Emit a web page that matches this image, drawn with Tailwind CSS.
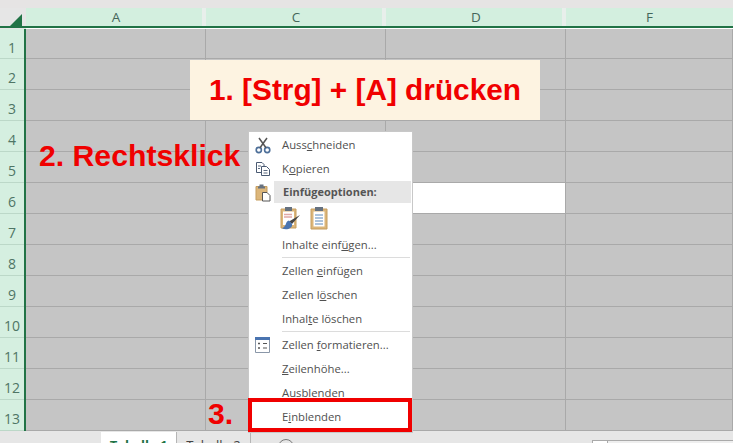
<!DOCTYPE html>
<html lang="de">
<head>
  <meta charset="UTF-8" />
  <title>Excel Einblenden</title>
  <script src="https://cdn.jsdelivr.net/npm/@tailwindcss/browser@4"></script>
</head>
<body class="bg-[#e6e6e6] font-['Open_Sans',sans-serif] overflow-hidden">
  <div class="relative w-[733px] h-[443px] overflow-hidden flex flex-col">
    <div class="h-2 shrink-0 bg-[#e6e4e4]"></div>

    <!-- column headers -->
    <div class="h-[18px] shrink-0 grid grid-cols-[26px_180px_180px_180px_1fr] text-[13.5px] leading-[18px] text-[#44665a] text-center">
      <div class="bg-[#e6e6e6] flex justify-end items-end pr-[3px] pb-0">
        <svg width="13" height="13" viewBox="0 0 13 13"><path d="M0 13L12 1V13Z" fill="#217346"/></svg>
      </div>
      <div class="bg-[#d3efdf] relative">A<div class="absolute right-0 top-0 w-1 h-full bg-[#e8efeb]"></div></div>
      <div class="bg-[#d3efdf] relative">C<div class="absolute right-0 top-0 w-1 h-full bg-[#e8efeb]"></div></div>
      <div class="bg-[#d3efdf] relative">D<div class="absolute right-0 top-0 w-1 h-full bg-[#e8efeb]"></div></div>
      <div class="bg-[#d3efdf]">F</div>
    </div>
    <div class="h-[2px] shrink-0 bg-[#217346]"></div>
    <div class="h-px shrink-0 bg-white ml-[26px]"></div>

    <!-- sheet -->
    <div id="rows" class="shrink-0"></div>

    <!-- tabs -->
    <div class="flex-1 flex items-start pl-[101px] text-[13px] leading-[16px] pt-px">
      <div class="w-[76px] h-[14px] bg-white text-[#217346] font-bold text-center border-r border-[#b5b5b5] pt-[5px]">Tabelle 1</div>
      <div class="w-[74px] h-[14px] text-[#444] text-center border-r border-[#b5b5b5] pt-[5px]">Tabelle 2</div>
      <div class="ml-[27px] mt-[7px] w-4 h-4 rounded-full border border-[#777]"></div>
      <div class="ml-[298px] mt-[8px] w-4 h-4 bg-white border border-[#aaa]"></div>
      <div class="w-[125px] h-4 mt-[8px] border-t border-[#aaa] bg-[#efefef]"></div>
    </div>

    <!-- annotations -->
    <div class="absolute left-[190px] top-[60px] w-[350px] h-[60px] bg-[#fdf3e1] flex items-center justify-center font-['Liberation_Sans',sans-serif] font-bold text-[29.8px] text-[#f00000]">1. [Strg] + [A] drücken</div>
    <div class="absolute left-[39px] top-[138px] font-['Liberation_Sans',sans-serif] font-bold text-[30.2px] leading-9 text-[#f00000]">2. Rechtsklick</div>
    <div class="absolute left-[208px] top-[396px] font-['Liberation_Sans',sans-serif] font-bold text-[30.2px] leading-9 text-[#f00000]">3.</div>

    <!-- context menu -->
    <div class="absolute left-[248px] top-[131px] w-[165px] h-[302px] bg-white border border-[#c8c8c8] pt-[1px] text-[11.3px] text-[#505050]">
      <div class="h-6 flex items-center">
        <svg class="ml-[6px] w-[16px] h-[17px]" viewBox="0 0 16 17" fill="none" stroke="#4d6f99" stroke-width="1.6"><circle cx="3.8" cy="13" r="2.6"/><circle cx="12.2" cy="13" r="2.6"/><path d="M5 10.8 12 1M11 10.8 4 1" stroke="#555" stroke-width="1.500"/></svg>
        <span class="ml-[11px]">Auss<u>c</u>hneiden</span>
      </div>
      <div class="h-6 flex items-center">
        <svg class="ml-[6px] w-[16px] h-[16px]" viewBox="0 0 16 16" fill="#fff" stroke="#4a5a72"><path d="M1.500 1.500H7L9 3.500V11.500H1.500Z"/><path d="M6.500 5.500H11.500L14.500 8.500V14.500H6.500Z"/><path d="M3 5H6M3 7.500H5M8.500 9.500H12.500M8.500 12H12.500" stroke-width=".9"/></svg>
        <span class="ml-[11px]">K<u>o</u>pieren</span>
      </div>
      <div class="h-[22px] flex items-center">
        <svg class="ml-[6px] w-[16px] h-[19px]" viewBox="0 0 16 19"><path d="M1 3.500H12V17H1Z" fill="#dcb67a" stroke="#c59d5f"/><path d="M4.500 3.500V1.500H8.500V3.500H10V5.500H3V3.500Z" fill="#66717f"/><path d="M7.500 9.500H12L15 12.500V18H7.500Z" fill="#fff" stroke="#555"/></svg>
        <div class="ml-[3px] flex-1 mr-px h-[22px] bg-[#e6e6e6] font-bold text-[11px] leading-[22px] pl-[9px] text-[#555]">Einfügeoptionen:</div>
      </div>
      <div class="h-[30px] flex items-center pl-[31px] gap-[10px]">
        <svg class="w-[20px] h-[24px]" viewBox="0 0 20 24"><path d="M1 3H16V22H1Z" fill="#dcb67a" stroke="#c59d5f"/><path d="M3 5.500H14V19H3Z" fill="#fff"/><path d="M4.500 8.500H12.500M4.500 11H12.500" stroke="#c0504d" stroke-dasharray="1 1" stroke-width="1.500"/><path d="M5 1H12V5H5Z" fill="#66717f"/><path d="M20 9 12 18 9 15.500Z" fill="#444"/><path d="M9 14.500C5 15.500 7 20 2 22.500 8 24.500 13 21.500 12 18Z" fill="#4a74b0"/></svg>
        <svg class="w-[18px] h-[24px]" viewBox="0 0 18 24"><path d="M1 3H17V23H1Z" fill="#dcb67a" stroke="#c59d5f"/><path d="M3.500 5.500H14.500V20.500H3.500Z" fill="#fff"/><path d="M5 9H13M5 12H13M5 15H13M5 18H13" stroke="#5a87b8"/><path d="M5 1H13V5H5Z" fill="#66717f"/></svg>
      </div>
      <div class="h-6 flex items-center pl-[33px]"><span>Inhalte einf<u>ü</u>gen...</span></div>
      <div class="h-[2px] ml-[33px] mr-[2px] border-t border-[#dcdcdc]"></div>
      <div class="h-6 flex items-center pl-[33px]"><span>Zellen <u>e</u>infügen</span></div>
      <div class="h-6 flex items-center pl-[33px]"><span>Zellen l<u>ö</u>schen</span></div>
      <div class="h-6 flex items-center pl-[33px]"><span>Inhal<u>t</u>e löschen</span></div>
      <div class="h-[2px] ml-[33px] mr-[2px] border-t border-[#dcdcdc]"></div>
      <div class="h-6 flex items-center">
        <svg class="ml-[6px] w-[15px] h-[16px]" viewBox="0 0 15 16" fill="none"><path d="M.5 .5H14.500V15.500H.5Z" fill="#fff" stroke="#8a97a8"/><path d="M0 0H15V3H0Z" fill="#4a74b0"/><path d="M3 6.500H5M3 11H5" stroke="#555" stroke-width="1.500"/><path d="M8 6.500H12M8 11H12" stroke="#555"/></svg>
        <span class="ml-[12px]">Zellen <u>f</u>ormatieren...</span>
      </div>
      <div class="h-6 flex items-center pl-[33px]"><span><u>Z</u>eilenhöhe...</span></div>
      <div class="h-6 flex items-center pl-[33px]"><span>Ausblenden</span></div>
      <div class="h-6 flex items-center pl-[33px]"><span>E<u>i</u>nblenden</span></div>
    </div>
    <div class="absolute left-[248px] top-[398px] w-[164px] h-[34px] border-[4px] border-[#f00000]"></div>
  </div>

  <script>
    // 13 rows, only D6 stays white (the rest is selected)
    const rows = document.getElementById("rows");
    let html = "";
    for (let r = 1; r <= 13; r++) {
      const height = r === 1 ? "h-[30px]" : "h-[31px]";
      html += `<div class="${height} grid grid-cols-[24px_2px_180px_180px_180px_1fr]">`;
      html += `<div class="bg-[#d5efe0] border-b border-[#bcd8c8] text-[14px] text-[#4f7565] text-center flex items-center justify-center pt-[7px]">${r}</div>`;
      html += `<div class="bg-[#217346]"></div>`;
      for (let c = 0; c < 4; c++) {
        const white = r === 6 && c === 2;
        html += `<div class="${white ? "bg-white" : "bg-[#c5c5c5]"} border-b border-r border-[#a9a9a9]"></div>`;
      }
      html += `</div>`;
    }
    rows.innerHTML = html;
  </script>
</body>
</html>
